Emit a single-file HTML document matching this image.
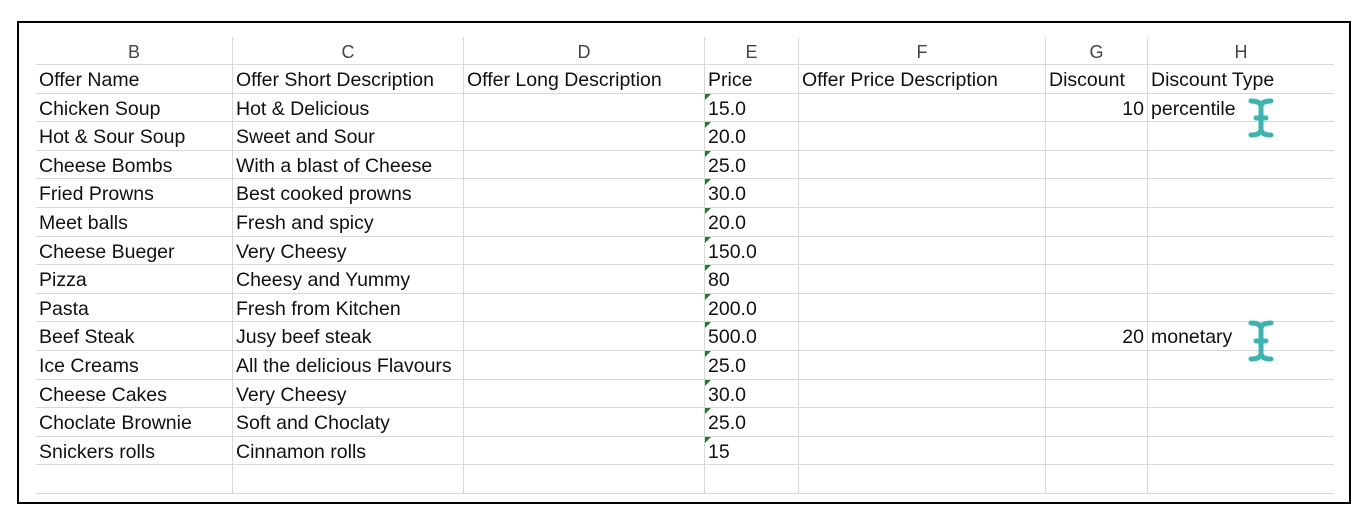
<!DOCTYPE html>
<html><head><style>
body{margin:0;width:1365px;height:530px;background:#fff;position:relative;overflow:hidden;font-family:"Liberation Sans",sans-serif;}
.box{position:absolute;left:17px;top:21px;width:1330px;height:479px;border:2px solid #000;}
.grid{position:absolute;left:36px;top:36.5px;width:1298px;display:grid;grid-template-columns:196px 230px 240px 93px 246px 101px 186px;grid-auto-rows:27.6px;gap:1px;background:#d8d8d8;padding-bottom:1px;}
.grid>div{background:#fff;padding:2px 0 0 3px;font-size:19.5px;color:#111;white-space:nowrap;overflow:hidden;position:relative;line-height:27px;}
.grid>.h{text-align:center;color:#444;font-size:18px;padding:1px 0 0 0;line-height:28px}
.r{text-align:right;padding-right:3px!important}
.g::before{content:"";position:absolute;left:0;top:0;border-top:6px solid #1a7f2a;border-right:6px solid transparent;}
.cur{position:absolute;left:1248px;}
</style></head><body>
<div class="box"></div>
<div class="grid">
<div class="h">B</div><div class="h">C</div><div class="h">D</div><div class="h">E</div><div class="h">F</div><div class="h">G</div><div class="h">H</div>
<div>Offer Name</div><div>Offer Short Description</div><div>Offer Long Description</div><div>Price</div><div>Offer Price Description</div><div>Discount</div><div>Discount Type</div>
<div>Chicken Soup</div><div>Hot &amp; Delicious</div><div></div><div class="g">15.0</div><div></div><div class="r">10</div><div>percentile</div>
<div>Hot &amp; Sour Soup</div><div>Sweet and Sour</div><div></div><div class="g">20.0</div><div></div><div></div><div></div>
<div>Cheese Bombs</div><div>With a blast of Cheese</div><div></div><div class="g">25.0</div><div></div><div></div><div></div>
<div>Fried Prowns</div><div>Best cooked prowns</div><div></div><div class="g">30.0</div><div></div><div></div><div></div>
<div>Meet balls</div><div>Fresh and spicy</div><div></div><div class="g">20.0</div><div></div><div></div><div></div>
<div>Cheese Bueger</div><div>Very Cheesy</div><div></div><div class="g">150.0</div><div></div><div></div><div></div>
<div>Pizza</div><div>Cheesy and Yummy</div><div></div><div class="g">80</div><div></div><div></div><div></div>
<div>Pasta</div><div>Fresh from Kitchen</div><div></div><div class="g">200.0</div><div></div><div></div><div></div>
<div>Beef Steak</div><div>Jusy beef steak</div><div></div><div class="g">500.0</div><div></div><div class="r">20</div><div>monetary</div>
<div>Ice Creams</div><div>All the delicious Flavours</div><div></div><div class="g">25.0</div><div></div><div></div><div></div>
<div>Cheese Cakes</div><div>Very Cheesy</div><div></div><div class="g">30.0</div><div></div><div></div><div></div>
<div>Choclate Brownie</div><div>Soft and Choclaty</div><div></div><div class="g">25.0</div><div></div><div></div><div></div>
<div>Snickers rolls</div><div>Cinnamon rolls</div><div></div><div class="g">15</div><div></div><div></div><div></div>
<div></div><div></div><div></div><div></div><div></div><div></div><div></div>
</div>
<svg class="cur" style="top:98px" width="26" height="40" viewBox="0 0 26 40"><path d="M3 3 Q13 3 13 9 Q13 3 23 3 M13 9 V31 Q13 37 3 37 M13 31 Q13 37 23 37 M8 20 H18" fill="none" stroke="#3bb5b0" stroke-width="5" stroke-linecap="round"/></svg>
<svg class="cur" style="top:320px" width="26" height="42" viewBox="0 0 26 42"><path d="M3 3 Q13 3 13 9 Q13 3 23 3 M13 9 V33 Q13 39 3 39 M13 33 Q13 39 23 39 M8 21 H18" fill="none" stroke="#3bb5b0" stroke-width="5" stroke-linecap="round"/></svg>
</body></html>
